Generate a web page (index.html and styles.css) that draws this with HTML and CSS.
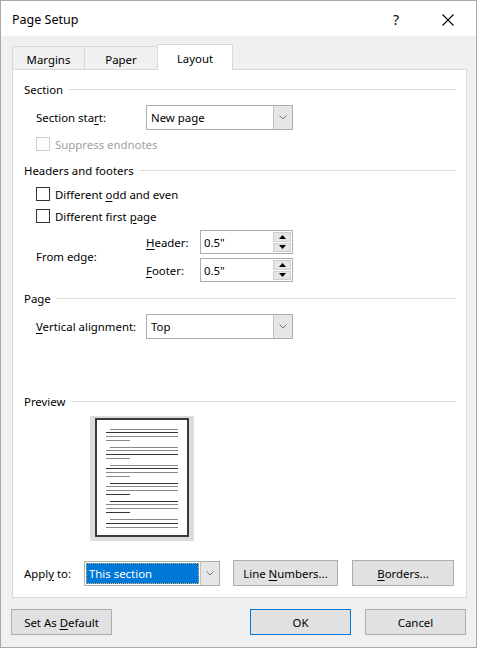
FILE: index.html
```html
<!DOCTYPE html>
<html>
<head>
<meta charset="utf-8">
<title>Page Setup</title>
<link rel="stylesheet" href="styles.css">
</head>
<body>
<div class="dialog">
  <div class="titlebar">
    <span class="title">Page Setup</span>
    <span class="help">?</span>
    <span class="close"><svg width="12" height="12" viewBox="0 0 12 12"><path d="M0.5 0.5 L11.5 11.5 M11.5 0.5 L0.5 11.5" stroke="#000" stroke-width="1.1" fill="none"/></svg></span>
  </div>
  <div class="client">
    <div class="tabs">
      <div class="tab t-margins">Margins</div>
      <div class="tab t-paper">Paper</div>
      <div class="tab active t-layout">Layout</div>
    </div>
    <div class="panel">
      <div class="group">Section</div>
      <div class="row r-start">
        <span class="lbl">Section sta<u>r</u>t:</span>
        <div class="combo c-wide">
          <span class="val">New page</span>
          <span class="dbtn"><svg width="8" height="5" viewBox="0 0 8 5"><polyline points="0.5,0.5 4,4 7.5,0.5" fill="none" stroke="#7a7a7a" stroke-width="1"/></svg></span>
        </div>
      </div>
      <div class="row crow r-suppress disabled">
        <span class="check"></span><span>Suppress endnotes</span>
      </div>
      <div class="group g-hf">Headers and footers</div>
      <div class="row crow r-odd">
        <span class="check"></span><span>Different <u>o</u>dd and even</span>
      </div>
      <div class="row crow r-first">
        <span class="check"></span><span>Different first <u>p</u>age</span>
      </div>
      <div class="row r-edge">
        <span class="lbl">From edge:</span>
        <div class="spins">
          <div class="spinrow">
            <span class="slbl"><u>H</u>eader:</span>
            <div class="spin">
              <span class="val">0.5"</span>
              <span class="arrows">
                <span class="arr"><svg width="7" height="4" viewBox="0 0 7 4"><polygon points="3.5,0 7,4 0,4" fill="#000"/></svg></span>
                <span class="arr"><svg width="7" height="4" viewBox="0 0 7 4"><polygon points="0,0 7,0 3.5,4" fill="#000"/></svg></span>
              </span>
            </div>
          </div>
          <div class="spinrow">
            <span class="slbl"><u>F</u>ooter:</span>
            <div class="spin">
              <span class="val">0.5"</span>
              <span class="arrows">
                <span class="arr"><svg width="7" height="4" viewBox="0 0 7 4"><polygon points="3.5,0 7,4 0,4" fill="#000"/></svg></span>
                <span class="arr"><svg width="7" height="4" viewBox="0 0 7 4"><polygon points="0,0 7,0 3.5,4" fill="#000"/></svg></span>
              </span>
            </div>
          </div>
        </div>
      </div>
      <div class="group g-page">Page</div>
      <div class="row r-valign">
        <span class="lbl"><u>V</u>ertical alignment:</span>
        <div class="combo c-wide">
          <span class="val">Top</span>
          <span class="dbtn"><svg width="8" height="5" viewBox="0 0 8 5"><polyline points="0.5,0.5 4,4 7.5,0.5" fill="none" stroke="#7a7a7a" stroke-width="1"/></svg></span>
        </div>
      </div>
      <div class="group g-preview">Preview</div>
      <div class="preview">
        <svg width="104" height="125" viewBox="0 0 104 125">
          <rect x="0" y="0" width="104" height="125" fill="#dcdcdc"/>
          <rect x="6" y="3" width="92" height="117" fill="#fff" stroke="#3a3a3a" stroke-width="2"/>
          <g stroke-width="1" fill="none">
            <line x1="20" y1="13.5" x2="88" y2="13.5" stroke="#8a8a8a"/>
            <line x1="16" y1="16.5" x2="88" y2="16.5" stroke="#333"/>
            <line x1="16" y1="20.5" x2="88" y2="20.5" stroke="#8a8a8a"/>
            <line x1="16" y1="24.5" x2="40" y2="24.5" stroke="#8a8a8a"/>

            <line x1="20" y1="31.5" x2="88" y2="31.5" stroke="#8a8a8a"/>
            <line x1="16" y1="34.5" x2="88" y2="34.5" stroke="#8a8a8a"/>
            <line x1="16" y1="38.5" x2="88" y2="38.5" stroke="#333"/>
            <line x1="16" y1="42.5" x2="40" y2="42.5" stroke="#8a8a8a"/>

            <line x1="20" y1="49.5" x2="88" y2="49.5" stroke="#8a8a8a"/>
            <line x1="16" y1="52.5" x2="88" y2="52.5" stroke="#333"/>
            <line x1="16" y1="56.5" x2="88" y2="56.5" stroke="#8a8a8a"/>
            <line x1="16" y1="60.5" x2="40" y2="60.5" stroke="#8a8a8a"/>

            <line x1="20" y1="67.5" x2="88" y2="67.5" stroke="#333"/>
            <line x1="16" y1="70.5" x2="88" y2="70.5" stroke="#8a8a8a"/>
            <line x1="16" y1="74.5" x2="88" y2="74.5" stroke="#8a8a8a"/>
            <line x1="16" y1="78.5" x2="40" y2="78.5" stroke="#333"/>

            <line x1="20" y1="85.5" x2="88" y2="85.5" stroke="#333"/>
            <line x1="16" y1="88.5" x2="88" y2="88.5" stroke="#8a8a8a"/>
            <line x1="16" y1="92.5" x2="88" y2="92.5" stroke="#8a8a8a"/>
            <line x1="16" y1="96.5" x2="40" y2="96.5" stroke="#333"/>

            <line x1="20" y1="103.5" x2="88" y2="103.5" stroke="#8a8a8a"/>
            <line x1="16" y1="107.5" x2="88" y2="107.5" stroke="#333"/>
            <line x1="16" y1="111.5" x2="88" y2="111.5" stroke="#8a8a8a"/>
          </g>
        </svg>
      </div>
      <div class="applyrow">
        <span class="albl">Appl<u>y</u> to:</span>
        <div class="combo c-apply">
          <span class="val"><span class="sel">This section</span></span>
          <span class="dbtn"><svg width="8" height="5" viewBox="0 0 8 5"><polyline points="0.5,0.5 4,4 7.5,0.5" fill="none" stroke="#7a7a7a" stroke-width="1"/></svg></span>
        </div>
        <div class="button b-lines"><span>Line <u>N</u>umbers...</span></div>
        <div class="button b-borders"><span><u>B</u>orders...</span></div>
      </div>
    </div>
    <div class="footer">
      <div class="button b-default"><span>Set As <u>D</u>efault</span></div>
      <div class="spacer"></div>
      <div class="button b-ok"><span>OK</span></div>
      <div class="button b-cancel"><span>Cancel</span></div>
    </div>
  </div>
</div>
</body>
</html>
```

FILE: styles.css
```css
* { box-sizing: border-box; }
body {
  margin: 0;
  background: #ffffff;
  font-family: "Noto Sans", "DejaVu Sans", sans-serif;
  font-size: 11.4px;
  color: #000;
}
u { text-decoration: underline; text-underline-offset: 2px; }

.dialog {
  width: 477px;
  height: 648px;
  border: 1px solid #a9a9a9;
  background: #f0f0f0;
  display: flex;
  flex-direction: column;
}

.titlebar {
  height: 35px;
  flex: none;
  background: #fff;
  display: flex;
  align-items: center;
  padding-top: 2px;
}
.title { font-size: 12.5px; margin-left: 11px; flex: 1; }
.help { width: 30px; text-align: center; font-size: 14px; margin-right: 14px; }
.close { width: 46px; margin-right: 5px; display: flex; justify-content: center; }

.client { flex: 1; display: flex; flex-direction: column; }

.tabs {
  display: flex;
  align-items: flex-end;
  height: 26px;
  margin: 8px 0 -1px 11px;
}
.tab {
  height: 23px;
  margin-bottom: 1px;
  border: 1px solid #d9d9d9;
  border-bottom: none;
  background: #f0f0f0;
  display: flex;
  align-items: center;
  justify-content: center;
  padding-top: 2px;
  position: relative;
  z-index: 1;
}
.t-margins { width: 73px; }
.t-paper { width: 74px; margin-left: -1px; }
.t-layout { width: 76px; margin-left: -1px; }
.tab.active { height: 26px; margin-bottom: 0; background: #fff; }

.panel {
  margin-left: 11px;
  width: 455px;
  height: 529px;
  flex: none;
  border: 1px solid #d9d9d9;
  background: #fff;
  padding: 9px 10px 0 11px;
  display: flex;
  flex-direction: column;
}

.group {
  display: flex;
  align-items: center;
  height: 20px;
  gap: 5px;
}
.group::after {
  content: "";
  flex: 1;
  height: 1px;
  background: #dcdcdc;
}
.g-hf { margin-top: 8px; }
.g-page { margin-top: 6px; }
.g-preview { margin-top: 52px; }

.row { display: flex; align-items: center; margin-left: 12px; }
.r-start { margin-top: 6px; height: 25px; }
.crow { height: 16px; }
.r-suppress { margin-top: 6px; }
.r-odd { margin-top: 6px; }
.r-first { margin-top: 6px; }
.r-edge { margin-top: 6px; }
.r-valign { margin-top: 6px; height: 25px; }

.lbl { width: 110px; flex: none; }

.check {
  width: 14px;
  height: 14px;
  border: 1px solid #333;
  background: #fff;
  margin-right: 5px;
  flex: none;
}
.disabled { color: #a0a0a0; }
.disabled .check { border-color: #cccccc; }

.combo {
  height: 25px;
  border: 1px solid #adadad;
  background: #fff;
  display: flex;
  flex: none;
}
.c-wide { width: 147px; }
.combo .val { flex: 1; display: flex; align-items: center; padding-left: 4px; }
.dbtn {
  width: 19px;
  background: #e6e6e6;
  border-left: 1px solid #c2c2c2;
  display: flex;
  align-items: center;
  justify-content: center;
}

.spins { display: flex; flex-direction: column; gap: 4px; }
.spinrow { display: flex; align-items: center; }
.slbl { width: 54px; }
.spin {
  width: 93px;
  height: 24px;
  border: 1px solid #adadad;
  background: #fff;
  display: flex;
}
.spin .val { flex: 1; padding-left: 3px; display: flex; align-items: center; }
.arrows {
  width: 19px;
  padding: 1px 1px 1px 0;
  display: flex;
  flex-direction: column;
  gap: 1px;
}
.arr {
  flex: 1;
  background: #e6e6e6;
  border: 1px solid #cfcfcf;
  display: flex;
  align-items: center;
  justify-content: center;
}

.preview { margin: 5px 0 0 66px; height: 125px; }
.preview svg { display: block; }

.applyrow { display: flex; align-items: center; margin-top: 19px; height: 26px; }
.albl { width: 60px; flex: none; }
.c-apply { width: 136px; margin-top: 1px; }
.c-apply .val { padding: 1px; }
.sel {
  flex: 1;
  align-self: stretch;
  background: #0078d7;
  color: #fff;
  border: 1px dotted #d8b06a;
  display: flex;
  align-items: center;
  padding-left: 2px;
}

.button {
  height: 26px;
  border: 1px solid #adadad;
  background: #e1e1e1;
  display: flex;
  align-items: center;
  justify-content: center;
  flex: none;
}
.b-lines { width: 105px; margin-left: 13px; }
.b-borders { width: 102px; margin-left: 14px; }

.footer { display: flex; margin-top: 11px; padding: 0 10px; }
.spacer { flex: 1; }
.b-default { width: 101px; }
.b-ok { width: 101px; border-color: #0078d7; margin-right: 14px; }
.b-cancel { width: 101px; }
```
